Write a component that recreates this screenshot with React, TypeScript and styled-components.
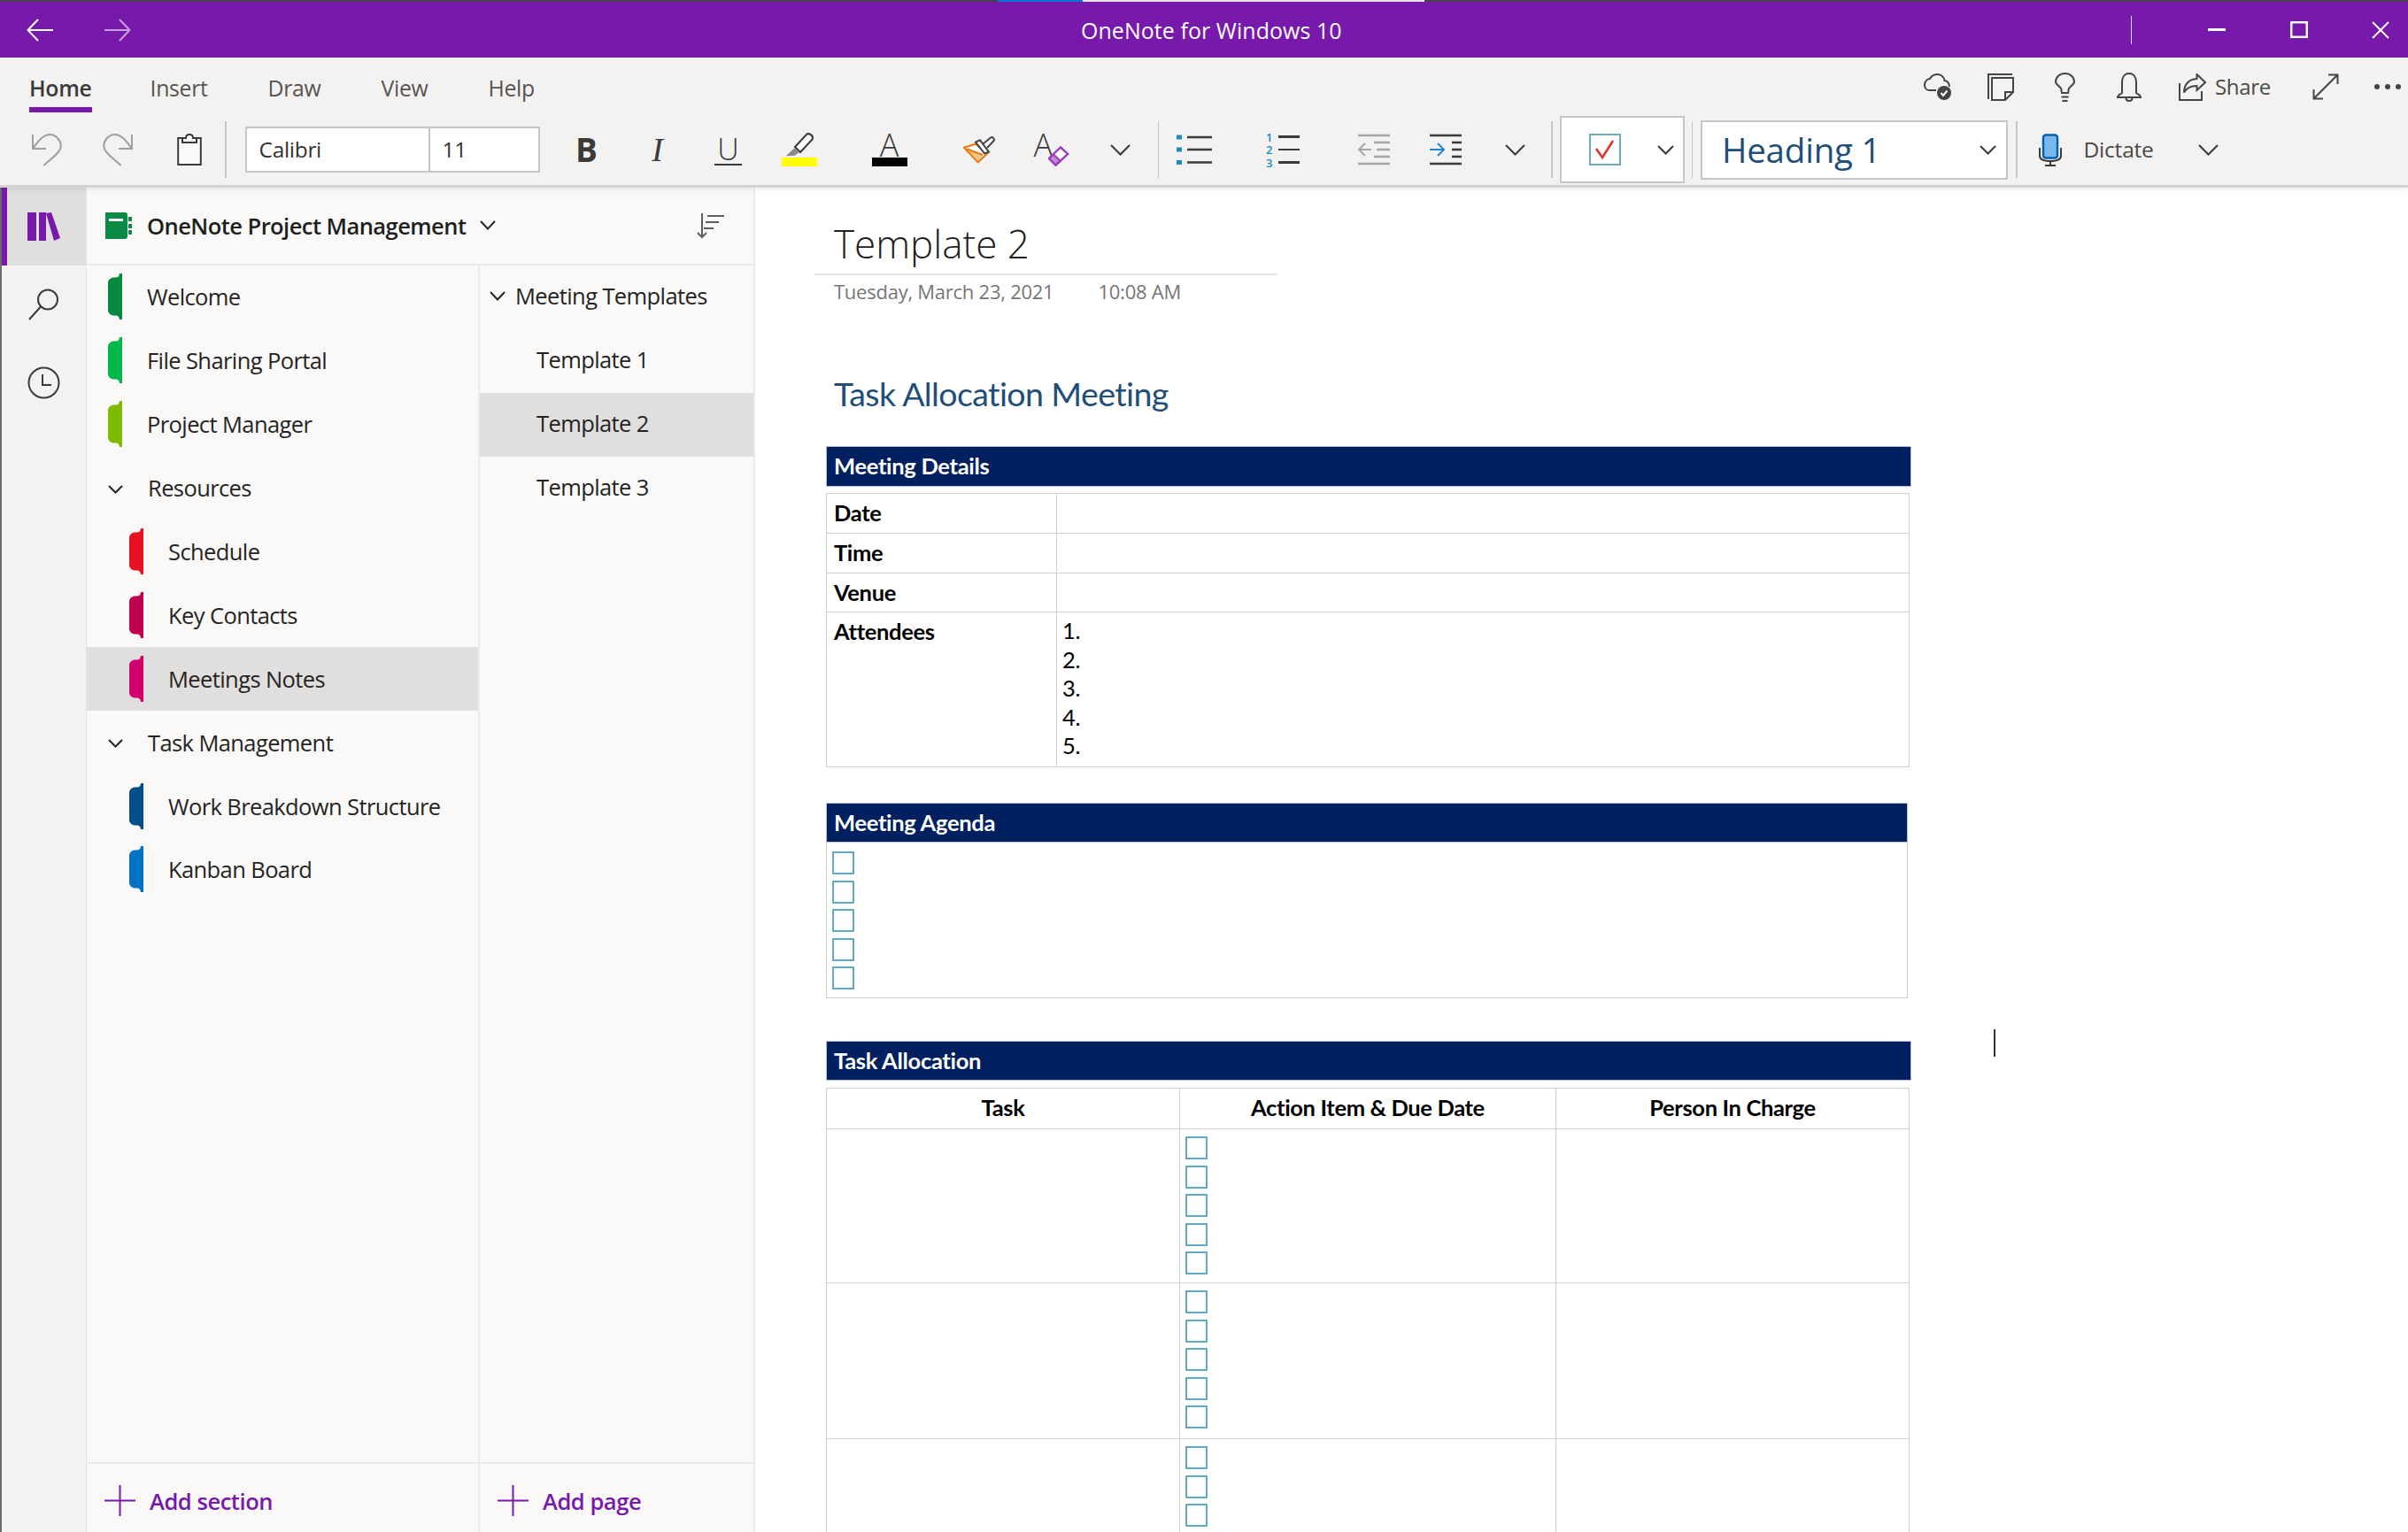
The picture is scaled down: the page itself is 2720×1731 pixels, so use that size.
import styled, { createGlobalStyle } from "styled-components";

const purple = "#7719aa";
const ink = "#3b3a39";
const ui = `"Open Sans", "Noto Sans", sans-serif`;
const note = `Lato, "Liberation Sans", sans-serif`;

const GlobalStyle = createGlobalStyle`
    html, body {
        margin: 0;
        padding: 0;
        background: #ffffff;
    }
    * {
        box-sizing: border-box;
    }
`;

const Frame = styled.div`
    width: 2720px;
    height: 1731px;
    display: flex;
    flex-direction: column;
    overflow: hidden;
    font-family: ${ui};
    color: #252423;
    position: relative;
`;

/* ---------- title bar ---------- */

const Strip = styled.div`
    height: 2px;
    display: flex;
    background: #444444;
`;

const StripPart = styled.div<{ $w: number; $c: string }>`
    width: ${(p) => p.$w}px;
    background: ${(p) => p.$c};
`;

const TitleBar = styled.div`
    height: 63px;
    background: ${purple};
    color: #ffffff;
    display: flex;
    align-items: center;
    position: relative;
    padding-left: 30px;
`;

const NavArrows = styled.div`
    display: flex;
    gap: 58px;
    align-items: center;
`;

const TitleText = styled.div`
    position: absolute;
    left: 1221px;
    top: 14px;
    font-size: 24.9px;
    line-height: 36px;
    letter-spacing: 0.1px;
`;

const WindowButtons = styled.div`
    margin-left: auto;
    display: flex;
    align-items: center;
    height: 100%;
`;

const TitleSep = styled.div`
    width: 1px;
    height: 32px;
    background: #e9d9f2;
    margin-right: 86px;
`;

const WinSlot = styled.div<{ $w: number }>`
    width: ${(p) => p.$w}px;
    display: flex;
    align-items: center;
    justify-content: flex-start;
`;

/* ---------- ribbon ---------- */

const Ribbon = styled.div`
    height: 147px;
    background: #f3f2f1;
    border-bottom: 3px solid #d4d3d2;
    box-shadow: 0 2px 6px rgba(0, 0, 0, 0.08);
    position: relative;
    z-index: 2;
`;

const TabRow = styled.div`
    height: 64px;
    display: flex;
    padding-left: 33px;
    padding-right: 8px;
`;

const Tabs = styled.div`
    display: flex;
    gap: 68px;
`;

const Tab = styled.div<{ $active?: boolean }>`
    height: 62px;
    padding-top: 17px;
    margin-right: ${(p) => (p.$active ? "-2px" : "0")};
    font-size: 24.8px;
    line-height: 34px;
    letter-spacing: -0.3px;
    color: ${(p) => (p.$active ? "#3b3a39" : "#565453")};
    font-weight: ${(p) => (p.$active ? 600 : 400)};
    border-bottom: 6px solid ${(p) => (p.$active ? purple : "transparent")};
`;

const RightTools = styled.div`
    margin-left: auto;
    display: flex;
    align-items: center;
    height: 64px;
`;

const TopSlot = styled.div<{ $w: number; $ml?: number; $left?: boolean }>`
    width: ${(p) => p.$w}px;
    margin-left: ${(p) => p.$ml ?? 0}px;
    display: flex;
    align-items: center;
    justify-content: ${(p) => (p.$left ? "flex-start" : "center")};
    color: #444444;
    height: 62px;
    padding-top: 2px;
`;

const ShareLabel = styled.span`
    font-size: 24px;
    line-height: 30px;
    color: #4a4948;
    letter-spacing: -0.3px;
    margin-left: 10px;
`;

const ToolRow = styled.div`
    height: 80px;
    display: flex;
    align-items: center;
    padding-left: 13px;
`;

const Tool = styled.div<{ $w: number; $ml?: number }>`
    width: ${(p) => p.$w}px;
    margin-left: ${(p) => p.$ml ?? 0}px;
    height: 60px;
    flex: none;
    display: flex;
    align-items: center;
    justify-content: center;
    color: ${ink};
`;

const Sep = styled.div<{ $ml?: number; $mr?: number }>`
    width: 1.5px;
    height: 64px;
    flex: none;
    background: #c8c6c4;
    margin-left: ${(p) => p.$ml ?? 0}px;
    margin-right: ${(p) => p.$mr ?? 0}px;
`;

const FontBox = styled.div`
    width: 333px;
    height: 52px;
    flex: none;
    display: grid;
    grid-template-columns: 207px 1fr;
    background: #ffffff;
    border: 2px solid #c8c6c4;
`;

const FontCell = styled.div<{ $divide?: boolean }>`
    font-size: 24.5px;
    line-height: 48px;
    padding-left: 14px;
    letter-spacing: -0.3px;
    color: #323130;
    border-right: ${(p) => (p.$divide ? "2px solid #c8c6c4" : "none")};
`;

const BoldGlyph = styled.span`
    font-weight: 700;
    font-size: 37px;
    line-height: 40px;
    color: ${ink};
`;

const ItalicGlyph = styled.span`
    font-family: "Liberation Serif", serif;
    font-style: italic;
    font-size: 38px;
    line-height: 40px;
    color: ${ink};
`;

const UnderGlyph = styled.span`
    display: block;
    font-weight: 300;
    font-size: 34px;
    line-height: 32px;
    color: ${ink};
    border-bottom: 2.5px solid ${ink};
    padding: 0 3px 1px;
`;

const ColorA = styled.div`
    width: 40px;
    display: flex;
    flex-direction: column;
    align-items: center;
`;

const AGlyph = styled.span`
    display: block;
    font-weight: 300;
    font-size: 36px;
    line-height: 28px;
    color: ${ink};
`;

const ColorBar = styled.div<{ $c: string }>`
    width: 40px;
    height: 10px;
    background: ${(p) => p.$c};
`;

const StyleA = styled.div`
    width: 40px;
    height: 38px;
    position: relative;
`;

const Eraser = styled.svg`
    position: absolute;
    right: 0;
    bottom: 0;
`;

const CheckBox = styled.div`
    width: 141px;
    height: 76px;
    flex: none;
    margin: 0 8px;
    background: #ffffff;
    border: 2px solid #c8c6c4;
    display: flex;
    align-items: center;
    padding-left: 31px;
    gap: 41px;
`;

const StyleBox = styled.div`
    width: 347px;
    height: 67px;
    flex: none;
    margin: 0 9px;
    background: #ffffff;
    border: 2px solid #c8c6c4;
    display: flex;
    align-items: center;
    padding: 0 11px 0 22px;
    justify-content: space-between;
`;

const StyleName = styled.span`
    font-size: 38.5px;
    line-height: 50px;
    letter-spacing: -0.2px;
    color: #1f4e79;
`;

const DictateLabel = styled.span`
    font-size: 24.5px;
    line-height: 30px;
    letter-spacing: -0.2px;
    color: #4a4948;
`;

const NumList = styled.div`
    width: 38px;
    display: flex;
    flex-direction: column;
    gap: 0.5px;
`;

const NumRow = styled.div`
    height: 14px;
    display: flex;
    align-items: center;
    justify-content: space-between;
`;

const NumDigit = styled.span`
    font-size: 13px;
    line-height: 14px;
    font-weight: 600;
    color: #1b8acb;
`;

const NumBar = styled.div`
    width: 24px;
    height: 2.5px;
    background: ${ink};
`;

/* ---------- main ---------- */

const Main = styled.div`
    flex: 1;
    min-height: 0;
    display: flex;
    border-left: 2px solid #6b6b6b;
`;

const Rail = styled.div`
    width: 96px;
    flex: none;
    background: #f3f2f1;
    border-right: 1px solid #e4e2e0;
    display: flex;
    flex-direction: column;
`;

const RailItem = styled.div<{ $active?: boolean; $h: number }>`
    height: ${(p) => p.$h}px;
    display: flex;
    align-items: center;
    justify-content: center;
    color: ${ink};
    background: ${(p) => (p.$active ? "#e1dfdd" : "transparent")};
    border-left: 6px solid ${(p) => (p.$active ? purple : "transparent")};
    padding-right: 6px;
`;

const NavArea = styled.div`
    width: 755px;
    flex: none;
    display: grid;
    grid-template-columns: 444px 311px;
    grid-template-rows: 88px 1fr 79px;
    background: #faf9f8;
`;

const NavHead = styled.div`
    grid-column: 1 / 3;
    display: flex;
    align-items: center;
    padding-left: 21px;
    padding-right: 33px;
    padding-bottom: 1px;
    border-bottom: 2px solid #edebe9;
    border-right: 2px solid #edebe9;
`;

const BookTitle = styled.span`
    font-size: 25.5px;
    line-height: 34px;
    font-weight: 600;
    color: #201f1e;
    letter-spacing: -0.55px;
    margin-left: 17px;
    margin-right: 16px;
`;

const SortSlot = styled.div`
    margin-left: auto;
    display: flex;
    color: #605e5c;
`;

const Column = styled.div`
    border-right: 2px solid #edebe9;
    min-height: 0;
`;

const NavRow = styled.div<{ $indent?: number; $active?: boolean; $lift?: number }>`
    height: 71.9px;
    display: flex;
    align-items: center;
    padding-left: ${(p) => p.$indent ?? 0}px;
    padding-bottom: ${(p) => p.$lift ?? 1}px;
    background: ${(p) => (p.$active ? "#e1dfdd" : "transparent")};
    font-size: 25.5px;
    letter-spacing: -0.6px;
    color: #252423;
`;

const TabMark = styled.div`
    width: 44px;
    flex: none;
    display: flex;
    align-items: center;
`;

const GroupChevron = styled.div`
    width: 44px;
    flex: none;
    display: flex;
    align-items: center;
    margin-left: -1px;
    margin-right: 1px;
    padding-top: 3px;
`;

const PageChevron = styled.div`
    width: 29px;
    flex: none;
    display: flex;
    align-items: center;
    padding-top: 2px;
`;

const NavFoot = styled.div`
    border-top: 2px solid #edebe9;
    border-right: 2px solid #edebe9;
    display: flex;
    align-items: center;
    padding-left: 20px;
    padding-top: 6px;
    gap: 16px;
    font-size: 25.5px;
    font-weight: 600;
    letter-spacing: -0.45px;
    color: ${purple};
`;

/* ---------- page ---------- */

const Page = styled.div`
    flex: 1;
    min-width: 0;
    background: #ffffff;
    padding-top: 34px;
    font-family: ${note};
    overflow: hidden;
`;

const PageHead = styled.div`
    width: 523px;
    margin-left: 67px;
    font-family: ${ui};
`;

const PageTitle = styled.div`
    height: 65px;
    padding-left: 22px;
    font-size: 44px;
    font-weight: 300;
    line-height: 58px;
    color: #1f1f1f;
    border-bottom: 2px solid #e6e6e6;
`;

const Stamp = styled.div`
    display: flex;
    gap: 50px;
    margin-top: 4px;
    padding-left: 22px;
    font-size: 22px;
    line-height: 28px;
    letter-spacing: -0.25px;
    color: #767676;
`;

const Heading = styled.div`
    margin: 77px 0 34px 89px;
    font-size: 37.5px;
    line-height: 50px;
    letter-spacing: -0.6px;
    color: #1f4e79;
`;

const Block = styled.div<{ $w: number; $mt?: number }>`
    width: ${(p) => p.$w}px;
    margin-left: 80px;
    margin-top: ${(p) => p.$mt ?? 0}px;
`;

const Band = styled.div<{ $h: number }>`
    height: ${(p) => p.$h}px;
    background: #002060;
    color: #ffffff;
    font-weight: 700;
    font-size: 25.5px;
    line-height: ${(p) => p.$h - 3}px;
    padding-left: 8px;
    letter-spacing: -0.3px;
    border: 1px solid #b9c2d4;
`;

const Table = styled.div<{ $gap: number; $w: number }>`
    width: ${(p) => p.$w}px;
    margin-top: ${(p) => p.$gap}px;
    border: 1.5px solid #cfcfcf;
    border-bottom: none;
`;

const Row = styled.div<{ $cols: string; $h: number }>`
    display: grid;
    grid-template-columns: ${(p) => p.$cols};
    height: ${(p) => p.$h}px;
    border-bottom: 1.5px solid #cfcfcf;
`;

const Cell = styled.div<{ $head?: boolean; $center?: boolean; $divide?: boolean }>`
    border-right: ${(p) => (p.$divide ? "1.5px solid #cfcfcf" : "none")};
    font-weight: ${(p) => (p.$head ? 700 : 400)};
    font-size: 25.5px;
    line-height: 42px;
    letter-spacing: -0.35px;
    color: #000000;
    padding-left: ${(p) => (p.$center ? "0" : "8px")};
    text-align: ${(p) => (p.$center ? "center" : "left")};
`;

const NumLine = styled.div`
    height: 32.5px;
    line-height: 32.5px;
    margin-left: -2px;
    position: relative;
    top: 4px;
`;

const AgendaBody = styled.div`
    height: 176px;
    border: 1.5px solid #cfcfcf;
    border-top: none;
    padding: 10px 0 0 6px;
`;

const TickCell = styled.div`
    border-right: 1.5px solid #cfcfcf;
    padding: 8px 0 0 6px;
`;

const Tick = styled.div`
    width: 25px;
    height: 26px;
    border: 2px solid #62a9c8;
    background: #fdfdfe;
    margin-bottom: 6.5px;
`;

const Caret = styled.div`
    position: absolute;
    left: 2252px;
    top: 1163px;
    width: 1.5px;
    height: 31px;
    background: #333333;
`;

/* ---------- icons ---------- */

const Line = styled.svg<{ $c?: string; $flip?: boolean }>`
    display: block;
    flex: none;
    fill: none;
    stroke: currentColor;
    stroke-width: 2;
    color: ${(p) => p.$c ?? "inherit"};
    transform: ${(p) => (p.$flip ? "scaleX(-1)" : "none")};
`;

const Solid = styled.svg`
    display: block;
    flex: none;
`;

const Chevron = ({ w = 23, h = 13, c = "#3b3a39" }: { w?: number; h?: number; c?: string }) => (
    <Line width={w} height={h} viewBox={`0 0 ${w} ${h}`} $c={c} strokeWidth="2.4">
        <path d={`M1 1L${w / 2} ${h - 1.5}L${w - 1} 1`} />
    </Line>
);

const BackArrow = () => (
    <Line width="30" height="26" viewBox="0 0 30 26" $c="#ffffff">
        <path d="M30 13H2M13 1L1.5 13L13 25" />
    </Line>
);

const ForwardArrow = () => (
    <Line width="30" height="26" viewBox="0 0 30 26" $c="#c79fdc">
        <path d="M0 13H28M17 1L28.5 13L17 25" />
    </Line>
);

const Undo = ({ flip }: { flip?: boolean }) => (
    <Line width="34" height="37" viewBox="0 0 34 37" $c="#a19f9d" $flip={flip}>
        <path d="M1 1V17H16M1.7 16.3C7.7 7 14 1 20 1C27.7 1 32.7 8 32.7 14C32.7 20 26 25 13.3 36" />
    </Line>
);

const Clipboard = () => (
    <Line width="28" height="36" viewBox="0 0 28 36" strokeWidth="2.5">
        <path d="M6 5H1.2V35H26.8V5H22" fill="#fafafa" />
        <path d="M6 10V5H10C10 2 12 1 14 1C16 1 18 2 18 5H22V10Z" fill="#fafafa" />
    </Line>
);

const Highlighter = () => (
    <Line width="40" height="38" viewBox="0 0 40 38" $c="#3b3a39">
        <path d="M15 16L28 2C30 0 35 2 35 6C35 7 34 8 34 8L21 22Z" fill="#ffffff" />
        <path d="M4.7 26.3L14.7 17L19.7 22L14.7 25.7Z" fill="#8a8a8a" stroke="none" />
        <rect x="0" y="28" width="40" height="10" fill="#ffff00" stroke="none" />
    </Line>
);

const Brush = () => (
    <Line width="36" height="31" viewBox="0 0 36 31">
        <path d="M1 12.7L14 8.7L27.3 19.3L16.7 29.3Z" fill="#ffffff" stroke="#e8790f" strokeWidth="2.2" />
        <path d="M4 14.3L22 21L16.7 27.7Z" fill="#fbc27d" stroke="none" />
        <path d="M4 14.3L22 21" stroke="#e8790f" />
        <path d="M22 9L31 1.5C33 0 36 3 34.5 5L27 13" fill="#ffffff" stroke="#444444" />
        <path d="M14 6.7L19 4.3L29 17.7L24 19.3Z" fill="#ffffff" stroke="#444444" />
    </Line>
);

const Bullets = () => (
    <Line width="40" height="36" viewBox="0 0 40 36">
        <rect x="0" y="1.5" width="6" height="5" fill="#1b8acb" stroke="none" />
        <rect x="0" y="15.5" width="6" height="5" fill="#1b8acb" stroke="none" />
        <rect x="0" y="30" width="6" height="5" fill="#1b8acb" stroke="none" />
        <path d="M12 4H40M12 18H40M12 32.5H40" strokeWidth="2.5" />
    </Line>
);

const Outdent = () => (
    <Line width="38" height="36" viewBox="0 0 38 36" $c="#a6a6a6">
        <path d="M1 2H37M1 34H37" strokeWidth="2.5" />
        <path d="M19 10H37M22 18H37M19 26H37" strokeWidth="2.5" />
        <path d="M16 18H2M9 11L2 18L9 25" />
    </Line>
);

const Indent = () => (
    <Line width="38" height="36" viewBox="0 0 38 36" $c="#3b3a39">
        <path d="M1 2H37M1 34H37" strokeWidth="2.5" />
        <path d="M26 10H37M26 18H37M26 26H37" strokeWidth="2.5" />
        <path d="M1 18H17M10 11L17 18L10 25" stroke="#1b8acb" />
    </Line>
);

const TodoIcon = () => (
    <Line width="36" height="36" viewBox="0 0 36 36">
        <rect x="1" y="1" width="34" height="34" stroke="#6fa9bf" fill="#ffffff" />
        <path d="M8 17L15 27L27 8" stroke="#d9332a" strokeWidth="2.5" />
    </Line>
);

const Mic = () => (
    <Line width="26" height="37" viewBox="0 0 26 37">
        <rect x="5" y="1.5" width="16" height="26" rx="3" fill="#78b7e8" stroke="#0063b1" strokeWidth="2.5" />
        <path d="M1 16V25C1 29 5 31 13 31C21 31 25 29 25 25V16" stroke="#3b3a39" />
        <path d="M13 31V36M7 36H19" stroke="#3b3a39" />
    </Line>
);

const CloudSync = () => (
    <Line width="32" height="31" viewBox="0 0 32 31">
        <path d="M14 19H6C2 19 1 15 1 13C1 8 5 6 7 6C9 2 12 1 16 1C20 1 23.5 5 23.5 8C27 8 29 12 29 15" />
        <circle cx="23" cy="22" r="8" fill="#444444" stroke="none" />
        <path d="M19.5 22L22 25L26.5 19.5" stroke="#ffffff" />
    </Line>
);

const NoteIcon = () => (
    <Line width="30" height="31" viewBox="0 0 30 31" strokeWidth="2.2">
        <path d="M1 29V1H28" />
        <path d="M5 5H29V21L20 30H5Z" />
        <path d="M20 29.5V21H29" />
    </Line>
);

const Bulb = () => (
    <Line width="23" height="33" viewBox="0 0 23 33">
        <path d="M7.5 22V19.5C7.5 16 1 14 1 10.5C1 5 5.5 1 11.5 1C17.5 1 22 5 22 10.5C22 14 15.5 16 15.5 19.5V22" />
        <path d="M7 23H16M7.5 27.5H15.5M8.5 32H14.5" />
    </Line>
);

const Bell = () => (
    <Line width="28" height="33" viewBox="0 0 28 33">
        <path d="M6 23V11C6 5 9 1 14 1C19 1 22 5 22 11V23C22 24 27 25 27 28H1C1 25 6 24 6 23Z" />
        <path d="M10.5 28.5C10.5 31 12 32 14 32C16 32 17.5 31 17.5 28.5" />
    </Line>
);

const ShareIcon = () => (
    <Line width="31" height="31" viewBox="0 0 31 31">
        <path d="M1 11V30H26V20" />
        <path d="M6 21.5C6 13 11 6.5 20.5 6V1L30 10L20.5 19V14C14 14 9 16 6 21.5Z" />
    </Line>
);

const Expand = () => (
    <Line width="30" height="30" viewBox="0 0 30 30">
        <path d="M2 28L28 2M18 1.5H28.5V12M1.5 18V28.5H12" />
    </Line>
);

const Dots = () => (
    <Line width="30" height="8" viewBox="0 0 30 8">
        <circle cx="3" cy="4" r="3" fill="currentColor" stroke="none" />
        <circle cx="15" cy="4" r="3" fill="currentColor" stroke="none" />
        <circle cx="27" cy="4" r="3" fill="currentColor" stroke="none" />
    </Line>
);

const Library = () => (
    <Solid width="37" height="32" viewBox="0 0 37 32" fill={purple}>
        <rect x="0" y="0" width="10" height="32" />
        <rect x="13" y="0" width="8" height="32" />
        <path d="M21 1L27 0L37 29L30 32Z" />
    </Solid>
);

const Search = () => (
    <Line width="35" height="36" viewBox="0 0 35 36">
        <circle cx="22" cy="12.5" r="11" />
        <path d="M14 20.5L1 35" />
    </Line>
);

const Clock = () => (
    <Line width="37" height="37" viewBox="0 0 37 37">
        <circle cx="18.5" cy="18.5" r="17" />
        <path d="M17 9V21H27" />
    </Line>
);

const Notebook = () => (
    <Solid width="30" height="30" viewBox="0 0 30 30">
        <path d="M0 0H22C24 0 25 1 25 3V27C25 29 24 30 22 30H0Z" fill="#0b8a45" />
        <rect x="4" y="7" width="16" height="3" fill="#ffffff" />
        <rect x="26" y="5" width="4" height="5" fill="#0b8a45" />
        <rect x="26" y="13" width="4" height="5" fill="#0b8a45" />
        <rect x="26" y="20" width="4" height="5" fill="#0b8a45" />
    </Solid>
);

const SortIcon = () => (
    <Line width="31" height="30" viewBox="0 0 31 30">
        <path d="M31 4H12M25 11H10M19 18H8" />
        <path d="M6 1V28M1 23L6 28L11 23" />
    </Line>
);

const SectionTab = ({ c }: { c: string }) => (
    <Solid width="16" height="52" viewBox="0 0 16 52">
        <path
            d="M16 0V52H13C13 49 11 47.5 9 47.5H7C3 47.5 0 45 0 41V11C0 7 3 4.5 7 4.5H9C11 4.5 13 3 13 0Z"
            fill={c}
        />
    </Solid>
);

const Plus = () => (
    <Solid width="35" height="35" viewBox="0 0 35 35" stroke={purple} strokeWidth="2">
        <path d="M17.5 0V35M0 17.5H35" />
    </Solid>
);

/* ---------- data ---------- */

type SectionItem =
    | { kind: "tab"; name: string; color: string; nested?: boolean; active?: boolean }
    | { kind: "group"; name: string };

const sections: SectionItem[] = [
    { kind: "tab", name: "Welcome", color: "#038a3f" },
    { kind: "tab", name: "File Sharing Portal", color: "#00b74a" },
    { kind: "tab", name: "Project Manager", color: "#7fba00" },
    { kind: "group", name: "Resources" },
    { kind: "tab", name: "Schedule", color: "#e81123", nested: true },
    { kind: "tab", name: "Key Contacts", color: "#bf0050", nested: true },
    { kind: "tab", name: "Meetings Notes", color: "#d2006e", nested: true, active: true },
    { kind: "group", name: "Task Management" },
    { kind: "tab", name: "Work Breakdown Structure", color: "#004e8c", nested: true },
    { kind: "tab", name: "Kanban Board", color: "#0072c6", nested: true },
];

const pages = ["Template 1", "Template 2", "Template 3"];
const ticks = [1, 2, 3, 4, 5];
const taskCols = "399px 425px 1fr";

const Ticks = () => (
    <>
        {ticks.map((n) => (
            <Tick key={n} />
        ))}
    </>
);

function App() {
    return (
        <Frame>
            <GlobalStyle />
            <Strip>
                <StripPart $w={1127} $c="#444444" />
                <StripPart $w={96} $c="#0078d7" />
                <StripPart $w={386} $c="#e6e6e6" />
            </Strip>
            <TitleBar>
                <NavArrows>
                    <BackArrow />
                    <ForwardArrow />
                </NavArrows>
                <TitleText>OneNote for Windows 10</TitleText>
                <WindowButtons>
                    <TitleSep />
                    <WinSlot $w={93}>
                        <Solid width="20" height="3" viewBox="0 0 20 3" fill="#ffffff">
                            <rect width="20" height="3" />
                        </Solid>
                    </WinSlot>
                    <WinSlot $w={92}>
                        <Solid width="20" height="19" viewBox="0 0 20 19" fill="none" stroke="#ffffff" strokeWidth="2.5">
                            <rect x="1.2" y="1.2" width="17.6" height="16.6" />
                        </Solid>
                    </WinSlot>
                    <WinSlot $w={41}>
                        <Solid width="20" height="20" viewBox="0 0 20 20" fill="none" stroke="#ffffff" strokeWidth="2">
                            <path d="M1 1L19 19M19 1L1 19" />
                        </Solid>
                    </WinSlot>
                </WindowButtons>
            </TitleBar>
            <Ribbon>
                <TabRow>
                    <Tabs>
                        <Tab $active>Home</Tab>
                        <Tab>Insert</Tab>
                        <Tab>Draw</Tab>
                        <Tab>View</Tab>
                        <Tab>Help</Tab>
                    </Tabs>
                    <RightTools>
                        <TopSlot $w={68}>
                            <CloudSync />
                        </TopSlot>
                        <TopSlot $w={73}>
                            <NoteIcon />
                        </TopSlot>
                        <TopSlot $w={73}>
                            <Bulb />
                        </TopSlot>
                        <TopSlot $w={72}>
                            <Bell />
                        </TopSlot>
                        <TopSlot $w={110} $ml={20} $left>
                            <ShareIcon />
                            <ShareLabel>Share</ShareLabel>
                        </TopSlot>
                        <TopSlot $w={111}>
                            <Expand />
                        </TopSlot>
                        <TopSlot $w={30}>
                            <Dots />
                        </TopSlot>
                    </RightTools>
                </TabRow>
                <ToolRow>
                    <Tool $w={80}>
                        <Undo />
                    </Tool>
                    <Tool $w={80}>
                        <Undo flip />
                    </Tool>
                    <Tool $w={81}>
                        <Clipboard />
                    </Tool>
                    <Sep $mr={21} />
                    <FontBox>
                        <FontCell $divide>Calibri</FontCell>
                        <FontCell>11</FontCell>
                    </FontBox>
                    <Tool $w={80} $ml={13}>
                        <BoldGlyph>B</BoldGlyph>
                    </Tool>
                    <Tool $w={80}>
                        <ItalicGlyph>I</ItalicGlyph>
                    </Tool>
                    <Tool $w={80}>
                        <UnderGlyph>U</UnderGlyph>
                    </Tool>
                    <Tool $w={80}>
                        <Highlighter />
                    </Tool>
                    <Tool $w={124}>
                        <ColorA>
                            <AGlyph>A</AGlyph>
                            <ColorBar $c="#000000" />
                        </ColorA>
                    </Tool>
                    <Tool $w={78}>
                        <Brush />
                    </Tool>
                    <Tool $w={86}>
                        <StyleA>
                            <AGlyph>A</AGlyph>
                            <Eraser width="24" height="23" viewBox="0 0 24 23" fill="#ffffff" stroke="#9b3fc0" strokeWidth="2.4">
                                <path d="M14 1.5L22.3 9L8.5 21.5L1 14Z" />
                                <path d="M6 9.5L13.5 17L8.5 21.5L1 14Z" fill="#c08bd8" />
                            </Eraser>
                        </StyleA>
                    </Tool>
                    <Tool $w={70}>
                        <Chevron />
                    </Tool>
                    <Sep $ml={7} />
                    <Tool $w={80}>
                        <Bullets />
                    </Tool>
                    <Tool $w={120}>
                        <NumList>
                            {ticks.slice(0, 3).map((n) => (
                                <NumRow key={n}>
                                    <NumDigit>{n}</NumDigit>
                                    <NumBar />
                                </NumRow>
                            ))}
                        </NumList>
                    </Tool>
                    <Tool $w={86}>
                        <Outdent />
                    </Tool>
                    <Tool $w={76}>
                        <Indent />
                    </Tool>
                    <Tool $w={81}>
                        <Chevron />
                    </Tool>
                    <Sep />
                    <CheckBox>
                        <TodoIcon />
                        <Chevron w={19} h={11} />
                    </CheckBox>
                    <Sep />
                    <StyleBox>
                        <StyleName>Heading 1</StyleName>
                        <Chevron w={19} h={11} />
                    </StyleBox>
                    <Sep />
                    <Tool $w={75}>
                        <Mic />
                    </Tool>
                    <DictateLabel>Dictate</DictateLabel>
                    <Tool $w={124}>
                        <Chevron />
                    </Tool>
                </ToolRow>
            </Ribbon>
            <Main>
                <Rail>
                    <RailItem $active $h={88}>
                        <Library />
                    </RailItem>
                    <RailItem $h={88}>
                        <Search />
                    </RailItem>
                    <RailItem $h={88}>
                        <Clock />
                    </RailItem>
                </Rail>
                <NavArea>
                    <NavHead>
                        <Notebook />
                        <BookTitle>OneNote Project Management</BookTitle>
                        <Chevron w={18} h={11} c="#252423" />
                        <SortSlot>
                            <SortIcon />
                        </SortSlot>
                    </NavHead>
                    <Column>
                        {sections.map((s) =>
                            s.kind === "group" ? (
                                <NavRow key={s.name} $indent={25}>
                                    <GroupChevron>
                                        <Chevron w={17} h={10} c="#252423" />
                                    </GroupChevron>
                                    {s.name}
                                </NavRow>
                            ) : (
                                <NavRow key={s.name} $indent={s.nested ? 48 : 24} $active={s.active}>
                                    <TabMark>
                                        <SectionTab c={s.color} />
                                    </TabMark>
                                    {s.name}
                                </NavRow>
                            ),
                        )}
                    </Column>
                    <Column>
                        <NavRow $indent={11} $lift={4}>
                            <PageChevron>
                                <Chevron w={18} h={11} c="#252423" />
                            </PageChevron>
                            Meeting Templates
                        </NavRow>
                        {pages.map((p) => (
                            <NavRow key={p} $indent={64} $lift={4} $active={p === "Template 2"}>
                                {p}
                            </NavRow>
                        ))}
                    </Column>
                    <NavFoot>
                        <Plus />
                        Add section
                    </NavFoot>
                    <NavFoot>
                        <Plus />
                        Add page
                    </NavFoot>
                </NavArea>
                <Page>
                    <PageHead>
                        <PageTitle>Template 2</PageTitle>
                        <Stamp>
                            <span>Tuesday, March 23, 2021</span>
                            <span>10:08 AM</span>
                        </Stamp>
                    </PageHead>
                    <Heading>Task Allocation Meeting</Heading>

                    <Block $w={1226}>
                        <Band $h={46}>Meeting Details</Band>
                        <Table $gap={7} $w={1224}>
                            <Row $cols="260px 1fr" $h={45}>
                                <Cell $head $divide>Date</Cell>
                                <Cell />
                            </Row>
                            <Row $cols="260px 1fr" $h={45}>
                                <Cell $head $divide>Time</Cell>
                                <Cell />
                            </Row>
                            <Row $cols="260px 1fr" $h={44}>
                                <Cell $head $divide>Venue</Cell>
                                <Cell />
                            </Row>
                            <Row $cols="260px 1fr" $h={175}>
                                <Cell $head $divide>Attendees</Cell>
                                <Cell>
                                    {ticks.map((n) => (
                                        <NumLine key={n}>{n}.</NumLine>
                                    ))}
                                </Cell>
                            </Row>
                        </Table>
                    </Block>

                    <Block $w={1222} $mt={40}>
                        <Band $h={45}>Meeting Agenda</Band>
                        <AgendaBody>
                            <Ticks />
                        </AgendaBody>
                    </Block>

                    <Block $w={1226} $mt={48}>
                        <Band $h={45}>Task Allocation</Band>
                        <Table $gap={8} $w={1224}>
                            <Row $cols={taskCols} $h={46}>
                                <Cell $head $center $divide>Task</Cell>
                                <Cell $head $center $divide>Action Item &amp; Due Date</Cell>
                                <Cell $head $center>Person In Charge</Cell>
                            </Row>
                            {[174, 176, 176].map((h, i) => (
                                <Row key={i} $cols={taskCols} $h={h}>
                                    <Cell $divide />
                                    <TickCell>
                                        <Ticks />
                                    </TickCell>
                                    <Cell />
                                </Row>
                            ))}
                        </Table>
                    </Block>
                </Page>
            </Main>
            <Caret />
        </Frame>
    );
}

export default App;
